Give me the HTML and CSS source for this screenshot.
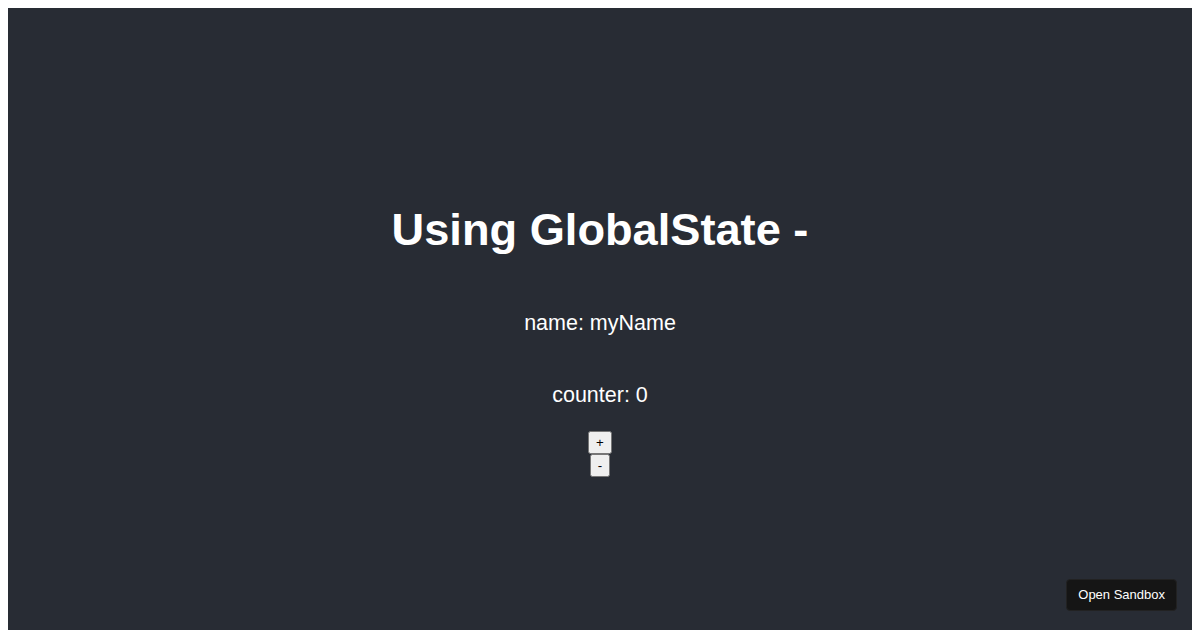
FILE: index.html
```html
<!DOCTYPE html>
<html lang="en">
<head>
  <meta charset="UTF-8">
  <meta name="viewport" content="width=device-width, initial-scale=1.0">
  <title>Using GlobalState</title>
  <link rel="stylesheet" href="styles.css">
</head>
<body>

<div class="App">
  <header class="App-header">
    <h1>Using GlobalState -</h1>
    <p>name: myName</p>
    <p>counter: <span id="counter">0</span></p>
    <button id="inc-btn">+</button>
    <button id="dec-btn">-</button>
  </header>
</div>

<a class="open-sandbox" href="#">Open Sandbox</a>

<script>
    const counterEl = document.getElementById('counter');
    let counter = 0;

    // Simple counter state
    document.getElementById('inc-btn').addEventListener('click', () => {
        counter++;
        counterEl.textContent = counter;
    });

    document.getElementById('dec-btn').addEventListener('click', () => {
        counter--;
        counterEl.textContent = counter;
    });
</script>

</body>
</html>
```

FILE: styles.css
```css
body {
    font-family: 'Liberation Sans', Arial, sans-serif;
}
.App {
    text-align: center;
}
.App-header {
    background-color: #282c34;
    min-height: 100vh;
    padding-top: 4px;
    box-sizing: border-box;
    display: flex;
    flex-direction: column;
    align-items: center;
    justify-content: center;
    font-size: calc(10px + 2vmin);
    color: white;
}
.App-header h1 {
    margin-bottom: 31px;
}
.App-header p {
    font-size: 21.5px;
    line-height: 26px;
    margin: 23px 0;
}
.App-header button {
    padding: 2px 6px;
}
.open-sandbox {
    position: fixed;
    right: 23px;
    bottom: 19px;
    padding: 0 11px;
    height: 32px;
    line-height: 30px;
    box-sizing: border-box;
    background-color: #151515;
    border: 1px solid #222;
    border-radius: 4px;
    color: #fff;
    font-size: 13px;
    text-decoration: none;
}
```
